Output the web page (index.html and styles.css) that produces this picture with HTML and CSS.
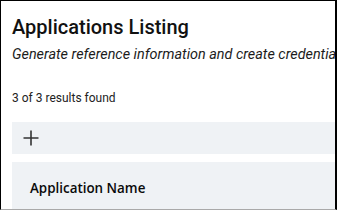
FILE: index.html
```html
<!DOCTYPE html>
<html>
<head>
<meta charset="utf-8">
<link rel="stylesheet" href="styles.css">
</head>
<body>
<div class="frame">
  <h1 class="title">Applications Listing</h1>
  <p class="subtitle">Generate reference information and create credentials for applications</p>
  <p class="count">3 of 3 results found</p>
  <div class="toolbar">
    <svg class="plus" width="16" height="16" viewBox="0 0 16 16"><path d="M8 0.5V15.5M0.5 8H15.5" stroke="#333" stroke-width="1.6" fill="none"/></svg>
  </div>
  <div class="table-head">
    <span class="col">Application Name</span>
  </div>
</div>
</body>
</html>
```

FILE: styles.css
```css
html, body {
  margin: 0;
  padding: 0;
  background: #fff;
}
.frame {
  box-sizing: border-box;
  width: 337px;
  height: 210px;
  border-top: 1px solid #000;
  border-left: 1px solid #000;
  border-right: 2px solid #000;
  border-bottom: 1px solid #a9a9a9;
  padding: 14px 0 0 11px;
  overflow: hidden;
  font-family: Roboto, "Liberation Sans", sans-serif;
}
.title {
  margin: 0;
  font-size: 20px;
  line-height: 24px;
  font-weight: 500;
  color: #111;
  white-space: nowrap;
}
.subtitle {
  margin: 6px 0 0;
  font-size: 14.4px;
  line-height: 20px;
  font-style: italic;
  color: #1c1c1c;
  white-space: nowrap;
  overflow: hidden;
}
.count {
  margin: 25px 0 0;
  font-size: 12px;
  line-height: 16px;
  color: #222;
}
.toolbar {
  margin-top: 16px;
  height: 32px;
  background: #eff2f5;
  display: flex;
  align-items: center;
  padding-left: 11px;
}
.plus {
  display: block;
}
.table-head {
  margin-top: 8px;
  height: 60px;
  background: #eff2f5;
  padding: 16px 0 0 18px;
  box-sizing: border-box;
}
.col {
  font-family: "Open Sans", "Noto Sans", sans-serif;
  font-weight: 600;
  font-size: 13.4px;
  line-height: 20px;
  color: #0a0a0a;
}
```
